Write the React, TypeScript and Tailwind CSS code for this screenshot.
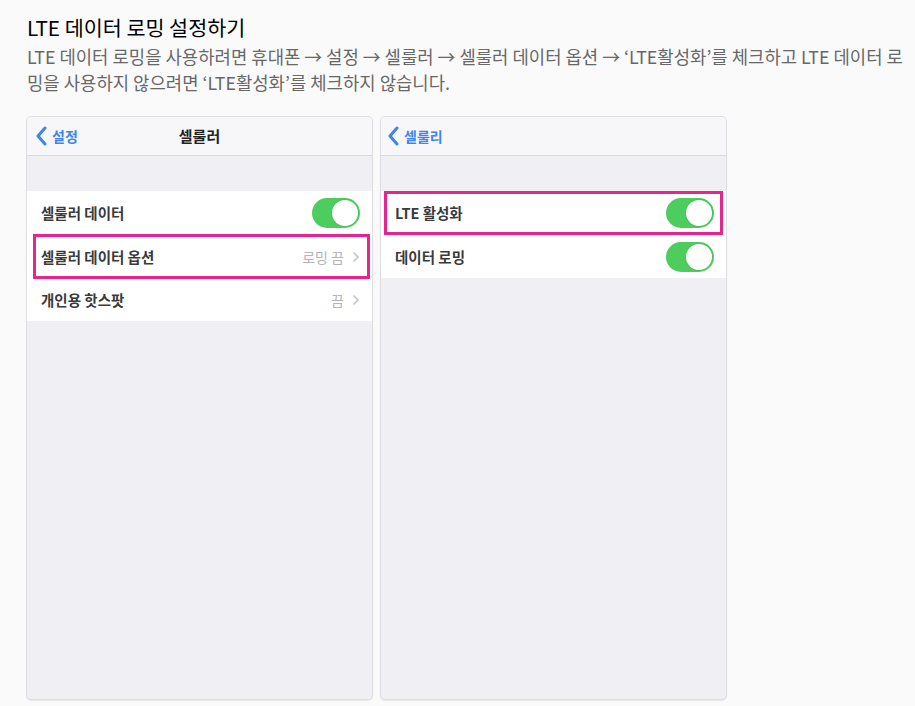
import React from "react";

const font = { fontFamily: '"Noto Sans CJK KR", "Noto Sans", sans-serif' };

function Toggle() {
  return (
    <div className="relative w-[48px] h-[30px] rounded-full bg-[#4ccd5e]">
      <div className="absolute right-[2px] top-[2px] w-[26px] h-[26px] rounded-full bg-white shadow-[0_0_0_1px_rgba(60,180,80,0.35)]" />
    </div>
  );
}

function Chevron() {
  return (
    <svg width="8" height="12" viewBox="0 0 8 12" className="ml-[8px]">
      <path d="M1.5 1.5 L6 6 L1.5 10.5" fill="none" stroke="#c4c4c8" strokeWidth="1.6" />
    </svg>
  );
}

function Back({ label }: { label: string }) {
  return (
    <div className="flex items-center gap-[5px] text-[#3d86f0] text-[14px] font-bold">
      <svg width="12" height="20" viewBox="0 0 12 20">
        <path d="M10 2 L3 10 L10 18" fill="none" stroke="#3d86f0" strokeWidth="3" strokeLinecap="round" strokeLinejoin="round" />
      </svg>
      <span>{label}</span>
    </div>
  );
}

function Row({ label, children, h = 44 }: { label: string; children?: React.ReactNode; h?: number }) {
  return (
    <div className="flex items-center justify-between bg-white pl-[14px] pr-[12px]" style={{ height: h }}>
      <span className="text-[14.5px] font-bold text-[#3a3a3a]">{label}</span>
      <div className="flex items-center">{children}</div>
    </div>
  );
}

export default function App() {
  return (
    <div className="w-[915px] h-[706px] bg-[#fafafa] overflow-hidden pl-[27px] pt-[12px]" style={font}>
      <h2 className="text-[20.7px] leading-[30px] text-black font-normal">LTE 데이터 로밍 설정하기</h2>
      <p className="w-[880px] text-[17.8px] leading-[26px] text-[#686868] mt-[1px]">
        LTE 데이터 로밍을 사용하려면 휴대폰 → 설정 → 셀룰러 → 셀룰러 데이터 옵션 → ‘LTE활성화’를 체크하고 LTE 데이터 로밍을 사용하지 않으려면 ‘LTE활성화’를 체크하지 않습니다.
      </p>
      <div className="flex gap-[7px] mt-[21px] -ml-[1px]">
        {/* Left screen */}
        <div className="relative w-[347px] h-[584px] rounded-[5px] border border-[#dedee2] bg-[#efeff4] overflow-hidden shadow-[0_1px_1px_rgba(0,0,0,0.08)]">
          <div className="relative h-[39px] bg-[#f7f7f9] border-b border-[#d9d9de] flex items-center px-[8px]">
            <Back label="설정" />
            <span className="absolute left-1/2 -translate-x-1/2 text-[15px] font-bold text-[#222]">셀룰러</span>
          </div>
          <div className="h-[35px]" />
          <Row label="셀룰러 데이터">
            <Toggle />
          </Row>
          <Row label="셀룰러 데이터 옵션">
            <span className="text-[14px] text-[#b4b4b8]">로밍 끔</span>
            <Chevron />
          </Row>
          <Row label="개인용 핫스팟" h={42}>
            <span className="text-[14px] text-[#b4b4b8]">끔</span>
            <Chevron />
          </Row>
          <div className="absolute left-[6px] top-[117px] w-[337px] h-[45px] border-[3px] border-[#e6268c]" />
        </div>
        {/* Right screen */}
        <div className="relative w-[347px] h-[584px] rounded-[5px] border border-[#dedee2] bg-[#efeff4] overflow-hidden shadow-[0_1px_1px_rgba(0,0,0,0.08)]">
          <div className="h-[39px] bg-[#f7f7f9] border-b border-[#d9d9de] flex items-center px-[6px]">
            <Back label="셀룰리" />
          </div>
          <div className="h-[35px]" />
          <Row label="LTE 활성화" h={44}>
            <Toggle />
          </Row>
          <Row label="데이터 로밍" h={43}>
            <Toggle />
          </Row>
          <div className="absolute left-[3px] top-[74px] w-[339px] h-[44px] border-[3px] border-[#e6268c]" />
        </div>
      </div>
    </div>
  );
}
